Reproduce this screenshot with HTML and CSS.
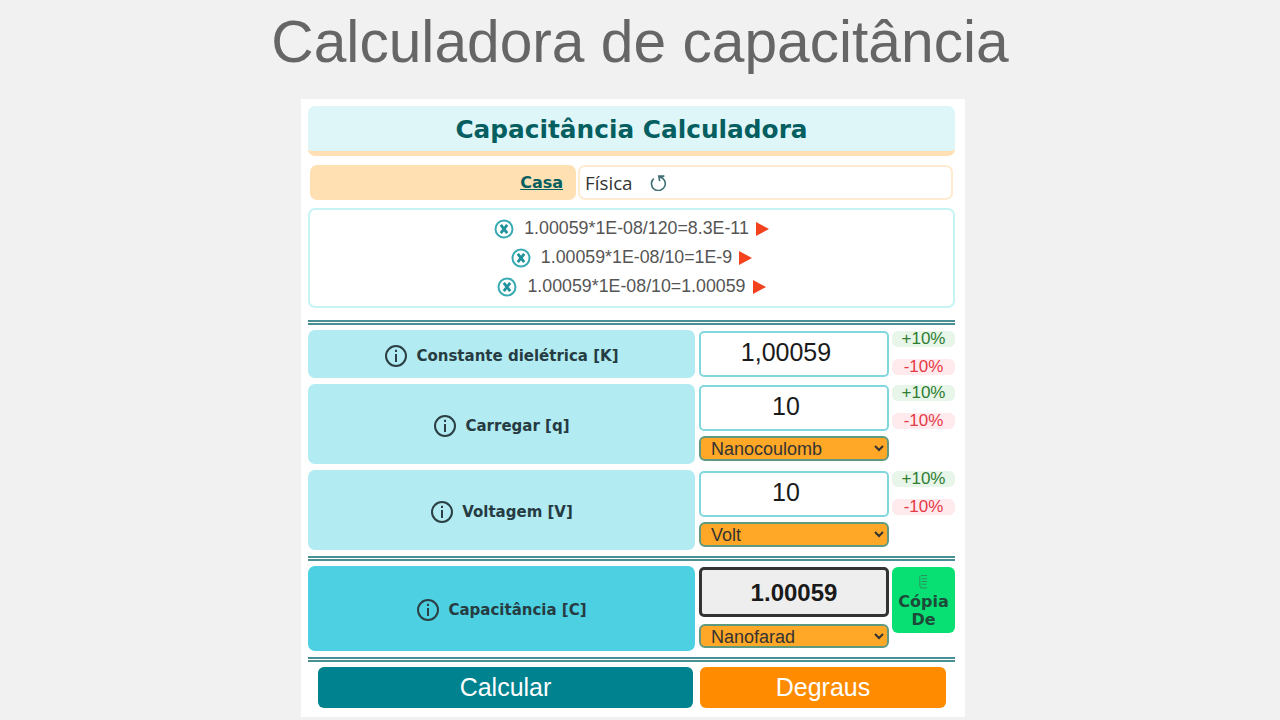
FILE: index.html
```html
<!DOCTYPE html>
<html lang="pt">

<head>
  <meta charset="UTF-8">
  <meta name="viewport" content="width=device-width, initial-scale=1.0">
  <title>Calculadora de capacitância</title>
  <link rel="stylesheet" href="styles.css">
</head>

<body>
  <h1 class="page-title">Calculadora de capacitância</h1>

  <div class="card">
    <div class="calc-header">Capacitância Calculadora</div>

    <div class="crumbs">
      <div class="crumb-home"><a href="#">Casa</a></div>
      <div class="crumb-topic">
        Física
        <svg class="reset" viewBox="0 0 16 16"><path d="M3.5 4.3A6.5 6.5 0 1 0 9 2.7M13.5 2H8.3l.8 4.6" /></svg>
      </div>
    </div>

    <!-- History of earlier results -->
    <div class="history">
      <div class="history-line">
        <svg class="x-icon" viewBox="0 0 20 20"><circle cx="10" cy="10" r="8.5" /><path d="M6.8 5.8l6.4 8.4M13.2 5.8l-6.4 8.4" /></svg>
        <span>1.00059*1E-08/120=8.3E-11</span>
        <i class="play"></i>
      </div>
      <div class="history-line">
        <svg class="x-icon" viewBox="0 0 20 20"><circle cx="10" cy="10" r="8.5" /><path d="M6.8 5.8l6.4 8.4M13.2 5.8l-6.4 8.4" /></svg>
        <span>1.00059*1E-08/10=1E-9</span>
        <i class="play"></i>
      </div>
      <div class="history-line">
        <svg class="x-icon" viewBox="0 0 20 20"><circle cx="10" cy="10" r="8.5" /><path d="M6.8 5.8l6.4 8.4M13.2 5.8l-6.4 8.4" /></svg>
        <span>1.00059*1E-08/10=1.00059</span>
        <i class="play"></i>
      </div>
    </div>

    <div class="rule rule-first"></div>

    <div class="row">
      <div class="label">
        <svg class="info-icon" viewBox="0 0 24 24"><circle cx="12" cy="12" r="10" /><path d="M12 10v8M12 5.8v2.2" /></svg>
        Constante dielétrica [K]
      </div>
      <div class="fields">
        <input class="num" type="text" value="1,00059">
      </div>
      <div class="steps">
        <span class="plus">+10%</span>
        <span class="minus">-10%</span>
      </div>
    </div>

    <div class="row">
      <div class="label">
        <svg class="info-icon" viewBox="0 0 24 24"><circle cx="12" cy="12" r="10" /><path d="M12 10v8M12 5.8v2.2" /></svg>
        Carregar [q]
      </div>
      <div class="fields">
        <input class="num" type="text" value="10">
        <select class="unit"><option>Nanocoulomb</option></select>
      </div>
      <div class="steps">
        <span class="plus">+10%</span>
        <span class="minus">-10%</span>
      </div>
    </div>

    <div class="row">
      <div class="label">
        <svg class="info-icon" viewBox="0 0 24 24"><circle cx="12" cy="12" r="10" /><path d="M12 10v8M12 5.8v2.2" /></svg>
        Voltagem [V]
      </div>
      <div class="fields">
        <input class="num" type="text" value="10">
        <select class="unit"><option>Volt</option></select>
      </div>
      <div class="steps">
        <span class="plus">+10%</span>
        <span class="minus">-10%</span>
      </div>
    </div>

    <div class="rule rule-mid"></div>

    <div class="row result-row">
      <div class="label result-label">
        <svg class="info-icon" viewBox="0 0 24 24"><circle cx="12" cy="12" r="10" /><path d="M12 10v8M12 5.8v2.2" /></svg>
        Capacitância [C]
      </div>
      <div class="fields">
        <input class="num result-num" type="text" value="1.00059" readonly>
        <select class="unit"><option>Nanofarad</option></select>
      </div>
      <button class="copy-btn" type="button">
        <svg class="copy-icon" viewBox="0 0 12 16"><path d="M3 1.5h7M2 2v11l1 2h7M4 5h6M4 8h6M4 11h5" /></svg>
        Cópia De
      </button>
    </div>

    <div class="rule rule-mid"></div>

    <div class="actions">
      <button class="btn btn-calc" type="button">Calcular</button>
      <button class="btn btn-steps" type="button">Degraus</button>
    </div>
  </div>
</body>

</html>
```

FILE: styles.css
```css
* {
  margin: 0;
  padding: 0;
  box-sizing: border-box;
  font-family: 'Liberation Sans', Arial, sans-serif;
}

body {
  background-color: #f1f1f1;
  height: 720px;
  overflow: hidden;
}

.page-title {
  height: 99px;
  padding-top: 7px;
  text-align: center;
  font-size: 58.7px;
  line-height: 70px;
  font-weight: normal;
  color: #666;
}

.card {
  width: 664px;
  height: 618px;
  margin-left: 301px;
  padding: 7px 10px 0 7px;
  background-color: #fff;
}

.calc-header {
  height: 50px;
  background-color: #dff6f9;
  border-bottom: 5px solid #ffdfb3;
  border-radius: 7px;
  text-align: center;
  font-family: 'DejaVu Sans', sans-serif;
  font-size: 24.8px;
  line-height: 47px;
  font-weight: bold;
  color: #055e60;
}

.crumbs {
  display: flex;
  gap: 2px;
  margin: 9px 2px 8px 2px;
  height: 35px;
}

.crumb-home {
  width: 266px;
  padding-right: 13px;
  background-color: #ffe0b2;
  border-radius: 7px;
  text-align: right;
  line-height: 36px;
}

.crumb-home a {
  font-family: 'DejaVu Sans', sans-serif;
  font-size: 16px;
  font-weight: bold;
  color: #055e60;
}

.crumb-topic {
  display: flex;
  align-items: center;
  gap: 17px;
  flex: 1;
  padding-left: 5px;
  border: 2px solid #ffecd0;
  border-radius: 7px;
  font-family: 'Open Sans', sans-serif;
  font-size: 18.8px;
  color: #333;
}

.reset {
  width: 17px;
  height: 17px;
  fill: none;
  stroke: #3f6f72;
  stroke-width: 1.5;
}

.history {
  height: 100px;
  padding-top: 4px;
  border: 2px solid #c6f4f4;
  border-radius: 7px;
}

.history-line {
  display: flex;
  justify-content: center;
  align-items: center;
  height: 29px;
  font-size: 17.8px;
  color: #555;
}

.x-icon {
  width: 20px;
  height: 20px;
  margin-right: 10px;
  fill: none;
}

.x-icon circle {
  stroke: #38aab2;
  stroke-width: 2;
}

.x-icon path {
  stroke: #1f929c;
  stroke-width: 2.8;
}

.play {
  width: 0;
  height: 0;
  margin-left: 7px;
  border-left: 13px solid #f4411e;
  border-top: 7px solid transparent;
  border-bottom: 7px solid transparent;
}

.rule {
  height: 5px;
  border-top: 2px solid #4a8f94;
  border-bottom: 2px solid #4a8f94;
}

.rule-first {
  margin: 12px 0 5px 0;
}

.rule-mid {
  margin: 6px 0 5px 0;
}

.row {
  display: grid;
  grid-template-columns: 387px 190px 63px;
  column-gap: 4px;
  margin-bottom: 6px;
}

.label {
  display: flex;
  justify-content: center;
  align-items: center;
  gap: 8px;
  padding-top: 3px;
  background-color: #b2ebf2;
  border-radius: 7px;
  font-family: 'DejaVu Sans', sans-serif;
  font-size: 15px;
  font-weight: bold;
  color: #263c42;
}

.result-label {
  background-color: #4dd0e1;
}

.info-icon {
  width: 24px;
  height: 24px;
  fill: none;
  stroke: #2b3f44;
  stroke-width: 2;
}

.fields {
  display: flex;
  flex-direction: column;
  gap: 5px;
  padding: 1px 0;
}

.num {
  width: 190px;
  height: 46px;
  padding: 0 16px 4px 0;
  border: 2px solid #80d8de;
  border-radius: 5px;
  background-color: #fff;
  text-align: center;
  font-size: 25px;
  color: #1a1a1a;
}

.result-num {
  height: 50px;
  padding: 2px 0 0 0;
  border: 3px solid #333;
  background-color: #eee;
  font-size: 24px;
  font-weight: bold;
}

.unit {
  width: 190px;
  height: 25px;
  margin-bottom: 2px;
  padding-left: 6px;
  border: 2px solid #5f9a80;
  border-radius: 6px;
  background-color: #ffa726;
  font-size: 18px;
  color: #333;
}

.steps {
  display: flex;
  flex-direction: column;
  gap: 12px;
  width: 63px;
  margin-top: 1px;
  margin-left: -1px;
  text-align: center;
  font-size: 17px;
}

.steps span {
  height: 16px;
  line-height: 15px;
  border-radius: 6px;
}

.plus {
  background-color: #e8f5e9;
  color: #2e7d32;
}

.minus {
  background-color: #ffebee;
  color: #e53945;
}

.result-row {
  margin-bottom: 0;
}

.result-row .fields {
  gap: 7px;
}

.result-row .unit {
  height: 24px;
}

.copy-btn {
  width: 63px;
  height: 66px;
  margin-top: 1px;
  margin-left: -1px;
  padding-top: 2px;
  border: none;
  border-radius: 6px;
  background-color: #08e074;
  font-family: 'DejaVu Sans', sans-serif;
  font-size: 16px;
  line-height: 18px;
  font-weight: bold;
  color: #1e4a3a;
}

.copy-icon {
  display: block;
  width: 11px;
  height: 15px;
  margin: 0 auto 4px auto;
  fill: none;
  stroke: #2c8a5c;
  stroke-width: 1;
}

.actions {
  display: flex;
  gap: 7px;
  padding-left: 10px;
}

.btn {
  height: 41px;
  border: none;
  border-radius: 6px;
  font-size: 25px;
  color: #fff;
}

.btn-calc {
  width: 375px;
  background-color: #00838f;
}

.btn-steps {
  width: 246px;
  background-color: #ff8c00;
}
```
